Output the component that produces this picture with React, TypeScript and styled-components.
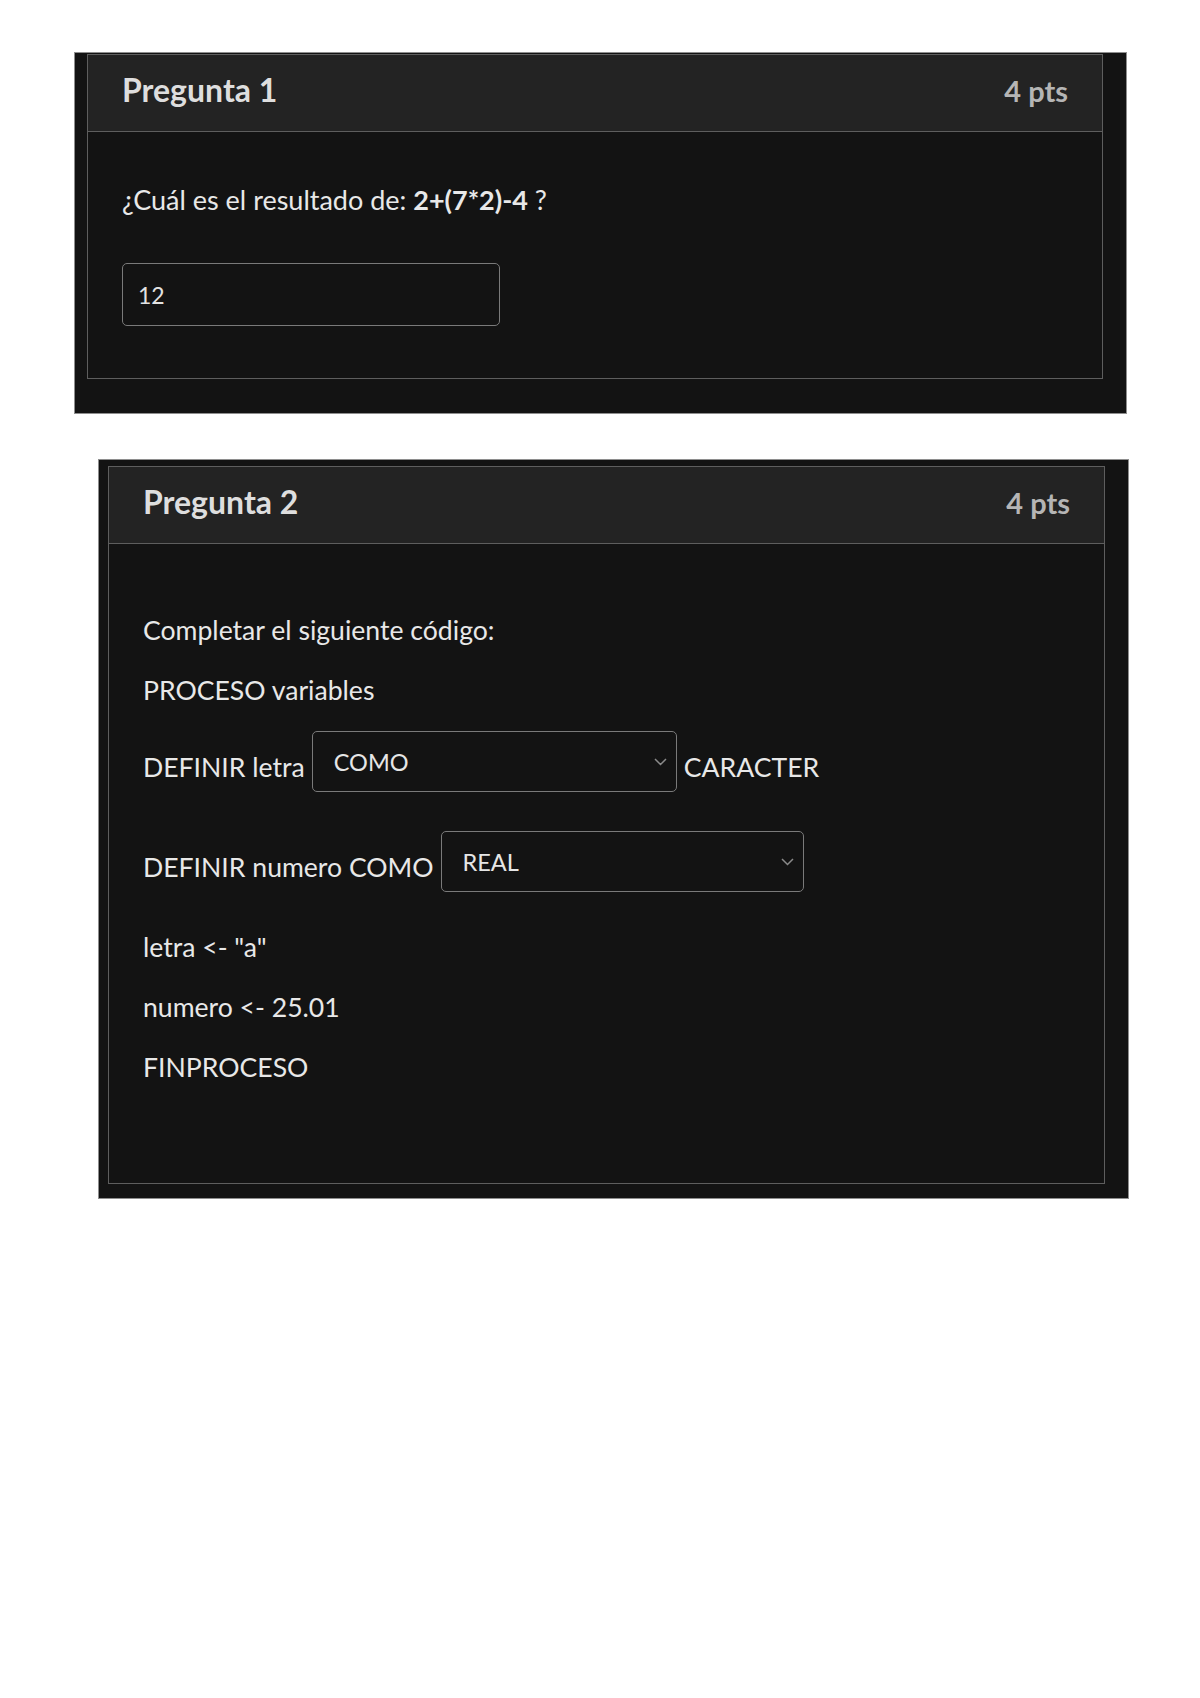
import React from 'react';
import styled, { createGlobalStyle } from 'styled-components';

const GlobalStyle = createGlobalStyle`
  html, body { margin: 0; padding: 0; background: #ffffff; }
  body { font-family: Lato, "Noto Sans", sans-serif; }
  *, *::before, *::after { box-sizing: border-box; }
`;

const Page = styled.main`
  display: flex;
  flex-direction: column;
  align-items: flex-start;
  min-height: 1698px;
`;

const Frame = styled.section<{ $left: number; $top: number; $width: number; $pad: string }>`
  margin-left: ${p => p.$left}px;
  margin-top: ${p => p.$top}px;
  width: ${p => p.$width}px;
  padding: ${p => p.$pad};
  background: #131313;
  border: 1px solid #8e8e8e;
`;

const Card = styled.div`
  border: 1px solid #5e5e5e;
  background: #131313;
`;

const Header = styled.header`
  height: 77px;
  display: flex;
  justify-content: space-between;
  align-items: baseline;
  padding: 16px 34px 0 34px;
  background: #232323;
  border-bottom: 1px solid #5e5e5e;
`;

const Title = styled.h2`
  margin: 0;
  font-size: 32px;
  line-height: 1.2;
  font-weight: 700;
  color: #dedede;
`;

const Points = styled.span`
  font-size: 29px;
  font-weight: 700;
  color: #b5b5b5;
`;

const Body = styled.div<{ $top: number; $bottom: number }>`
  padding: ${p => p.$top}px 34px ${p => p.$bottom}px 34px;
  color: #e8e8e8;
`;

const Question = styled.p`
  margin: 0;
  font-size: 27px;
  line-height: 34px;
  white-space: nowrap;
`;

const AnswerInput = styled.input`
  display: block;
  margin-top: 46px;
  width: 378px;
  height: 63px;
  padding: 0 15px;
  border: 1px solid #7a7a7a;
  border-radius: 5px;
  background: #131313;
  color: #e2e2e2;
  font-family: Lato, "Noto Sans", sans-serif;
  font-size: 23px;
  outline: none;
`;

const CodeLine = styled.p<{ $gap: number }>`
  margin: ${p => p.$gap}px 0 0;
  font-size: 26.6px;
  line-height: 36px;
  white-space: nowrap;
`;

const CodeRow = styled.div<{ $gap: number }>`
  display: flex;
  align-items: flex-start;
  gap: 7px;
  height: 61px;
  margin-top: ${p => p.$gap}px;
`;

const RowText = styled.span`
  margin-top: 18px;
  font-size: 26.6px;
  line-height: 36px;
  white-space: nowrap;
`;

const SelectBox = styled.div<{ $width: number }>`
  width: ${p => p.$width}px;
  height: 61px;
  flex: none;
  display: flex;
  align-items: center;
  justify-content: space-between;
  padding: 0 9px 0 21px;
  border: 1px solid #7a7a7a;
  border-radius: 5px;
  background: #131313;
  color: #e6e6e6;
  font-size: 23.5px;
`;

const Chevron = () => (
  <svg width="13" height="8" viewBox="0 0 13 8" aria-hidden="true">
    <polyline points="1,1 6.5,6.5 12,1" fill="none" stroke="#8a8a8a" strokeWidth="1.5" />
  </svg>
);

const Select: React.FC<{ value: string; width: number }> = ({ value, width }) => (
  <SelectBox $width={width}>
    <span>{value}</span>
    <Chevron />
  </SelectBox>
);

export default function App() {
  return (
    <>
      <GlobalStyle />
      <Page>
        <Frame $left={74} $top={52} $width={1053} $pad="1px 23px 34px 12px">
          <Card>
            <Header>
              <Title>Pregunta 1</Title>
              <Points>4 pts</Points>
            </Header>
            <Body $top={51} $bottom={52}>
              <Question>
                ¿Cuál es el resultado de: <strong>2+(7*2)-4</strong> ?
              </Question>
              <AnswerInput type="text" defaultValue="12" readOnly />
            </Body>
          </Card>
        </Frame>

        <Frame $left={98} $top={45} $width={1031} $pad="6px 23px 14px 9px">
          <Card>
            <Header>
              <Title>Pregunta 2</Title>
              <Points>4 pts</Points>
            </Header>
            <Body $top={68} $bottom={98}>
              <CodeLine $gap={0}>Completar el siguiente código:</CodeLine>
              <CodeLine $gap={24}>PROCESO variables</CodeLine>
              <CodeRow $gap={23}>
                <RowText>DEFINIR letra</RowText>
                <Select value="COMO" width={365} />
                <RowText>CARACTER</RowText>
              </CodeRow>
              <CodeRow $gap={39}>
                <RowText>DEFINIR numero COMO</RowText>
                <Select value="REAL" width={363} />
              </CodeRow>
              <CodeLine $gap={37}>letra &lt;- "a"</CodeLine>
              <CodeLine $gap={24}>numero &lt;- 25.01</CodeLine>
              <CodeLine $gap={24}>FINPROCESO</CodeLine>
            </Body>
          </Card>
        </Frame>
      </Page>
    </>
  );
}
